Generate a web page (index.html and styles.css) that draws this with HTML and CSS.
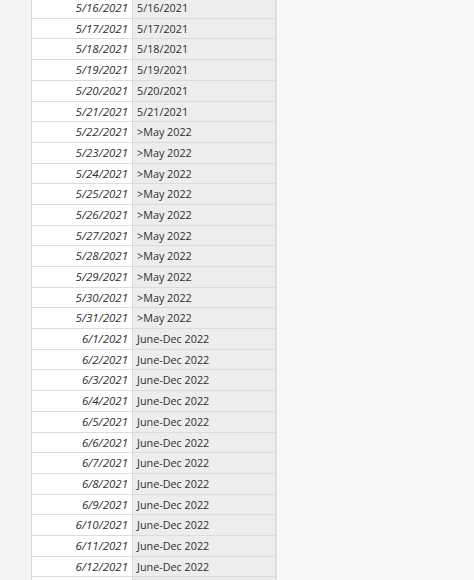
FILE: index.html
```html
<!DOCTYPE html>
<html>
<head>
<meta charset="utf-8">
<link rel="stylesheet" href="styles.css">
</head>
<body>
<div class="page">
  <div class="gutter"></div>
  <div class="table" id="table"></div>
  <div class="rest"></div>
</div>
<script>
const rows = [
["5/16/2021","5/16/2021"],["5/17/2021","5/17/2021"],["5/18/2021","5/18/2021"],["5/19/2021","5/19/2021"],
["5/20/2021","5/20/2021"],["5/21/2021","5/21/2021"],["5/22/2021",">May 2022"],["5/23/2021",">May 2022"],
["5/24/2021",">May 2022"],["5/25/2021",">May 2022"],["5/26/2021",">May 2022"],["5/27/2021",">May 2022"],
["5/28/2021",">May 2022"],["5/29/2021",">May 2022"],["5/30/2021",">May 2022"],["5/31/2021",">May 2022"],
["6/1/2021","June-Dec 2022"],["6/2/2021","June-Dec 2022"],["6/3/2021","June-Dec 2022"],["6/4/2021","June-Dec 2022"],
["6/5/2021","June-Dec 2022"],["6/6/2021","June-Dec 2022"],["6/7/2021","June-Dec 2022"],["6/8/2021","June-Dec 2022"],
["6/9/2021","June-Dec 2022"],["6/10/2021","June-Dec 2022"],["6/11/2021","June-Dec 2022"],["6/12/2021","June-Dec 2022"],
["",""]
];
const t = document.getElementById('table');
for (const [a,b] of rows) {
  const r = document.createElement('div');
  r.className = 'row';
  const c1 = document.createElement('div'); c1.className = 'c1'; c1.textContent = a;
  const c2 = document.createElement('div'); c2.className = 'c2'; c2.textContent = b;
  r.append(c1, c2);
  t.append(r);
}
</script>
</body>
</html>
```
FILE: styles.css
```css
html, body { margin: 0; padding: 0; }
body { width: 474px; height: 580px; overflow: hidden; background: #f8f8f8; font-family: "Open Sans", "Noto Sans", sans-serif; font-size: 11.5px; color: #2e2e2e; }
.page { display: flex; height: 580px; }
.gutter { width: 31px; background: #f3f3f3; border-right: 1px solid #d8d8d8; flex: none; }
.table { width: 243px; margin-top: -1.9px; flex: none; border-right: 1px solid #d6d6d6; }
.rest { flex: 1; background: #f8f8f8; border-left: 1px solid #e6e6e6; }
.row { display: flex; height: 19.7px; border-bottom: 1px solid #dcdcdc; }
.c1 { width: 96px; padding-right: 4px; background: #fff; text-align: right; font-style: italic; line-height: 20px; border-right: 1px solid #dcdcdc; }
.c2 { flex: 1; background: #ededed; padding-left: 4px; line-height: 20px; font-size: 10.8px; }
```
